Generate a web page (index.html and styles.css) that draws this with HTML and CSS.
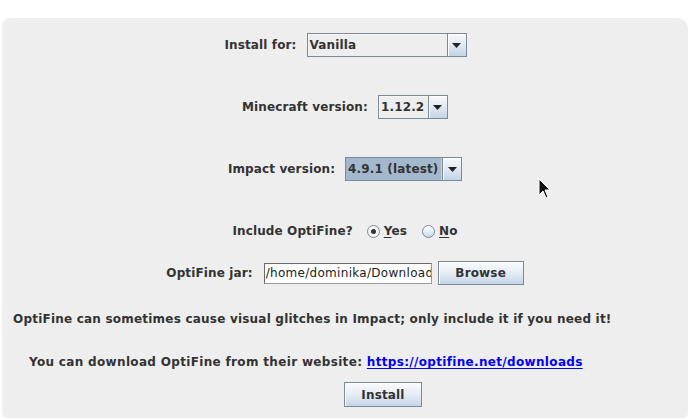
FILE: index.html
```html
<!DOCTYPE html>
<html>
<head>
<meta charset="utf-8">
<link rel="stylesheet" href="styles.css">
</head>
<body>
<div class="panel">
  <div class="row r1 centered">
    <span class="label">Install for:</span>
    <div class="combo w-install">
      <span class="combo-value">Vanilla</span>
      <span class="combo-arrow"><svg width="9" height="5" viewBox="0 0 9 5"><path d="M0 0H9L4.5 5Z" fill="#222"/></svg></span>
    </div>
  </div>
  <div class="row r2 centered">
    <span class="label">Minecraft version:</span>
    <div class="combo w-mc">
      <span class="combo-value">1.12.2</span>
      <span class="combo-arrow"><svg width="9" height="5" viewBox="0 0 9 5"><path d="M0 0H9L4.5 5Z" fill="#222"/></svg></span>
    </div>
  </div>
  <div class="row r3 centered">
    <span class="label">Impact version:</span>
    <div class="combo w-impact">
      <span class="combo-value selected">4.9.1 (latest)</span>
      <span class="combo-arrow"><svg width="9" height="5" viewBox="0 0 9 5"><path d="M0 0H9L4.5 5Z" fill="#222"/></svg></span>
    </div>
  </div>
  <div class="row r4 centered">
    <span class="label">Include OptiFine?</span>
    <span class="radio-group">
      <span class="radio checked"></span><span class="radio-text"><u>Y</u>es</span>
    </span>
    <span class="radio-group">
      <span class="radio"></span><span class="radio-text"><u>N</u>o</span>
    </span>
  </div>
  <div class="row r5 centered">
    <span class="label">OptiFine jar:</span>
    <div class="textfield"><span class="tf-text">/home/dominika/Download</span></div>
    <button class="btn btn-browse">Browse</button>
  </div>
  <div class="row r6 text-line">OptiFine can sometimes cause visual glitches in Impact; only include it if you need it!</div>
  <div class="row r7 text-line">You can download OptiFine from their website:&nbsp;<a class="link" href="#">https://optifine.net/downloads</a></div>
  <div class="row r8">
    <button class="btn btn-install">Install</button>
  </div>
</div>
<svg class="cursor" width="13" height="21" viewBox="0 0 13 21">
  <path d="M1 1V17L5 13L8 20L10 19L7 12H12Z" fill="#111" stroke="#fff" stroke-width="1" stroke-linejoin="miter"/>
</svg>
</body>
</html>
```

FILE: styles.css
```css
html, body {
  margin: 0;
  padding: 0;
  background: #ffffff;
}
body {
  width: 690px;
  height: 420px;
  overflow: hidden;
  position: relative;
  font-family: "DejaVu Sans", "Liberation Sans", sans-serif;
  font-size: 12px;
  font-weight: bold;
  color: #333333;
}
.panel {
  margin: 18px 2px 0 2px;
  width: 686px;
  height: 400px;
  background: #eeeeee;
  border-radius: 8px 11px 5px 5px;
  box-sizing: border-box;
  padding-top: 15px;
  display: flex;
  flex-direction: column;
}
.row {
  display: flex;
  align-items: center;
  flex: none;
}
.centered {
  justify-content: center;
}
.r1 { height: 24px; padding-left: 1px; }
.r2 { height: 24px; margin-top: 38px; }
.r3 { height: 24px; margin-top: 38px; }
.r4 { height: 20px; margin-top: 40px; }
.r5 { height: 24px; margin-top: 20px; }
.r6 { height: 16px; margin-top: 26px; padding-left: 11px; letter-spacing: 0.21px; }
.r7 { height: 16px; margin-top: 27px; padding-left: 27px; letter-spacing: 0.33px; }
.r8 { height: 25px; margin-top: 12px; padding-left: 342px; }

.label {
  margin-right: 10px;
  white-space: nowrap;
  line-height: 16px;
  letter-spacing: 0.12px;
}
.r5 .label { margin-right: 11px; }
.r4 .label { margin-right: 14px; }

.combo {
  display: flex;
  height: 24px;
  box-sizing: border-box;
  border: 1px solid #7a8a99;
  background: #eeeeee;
}
.w-install { width: 160px; }
.w-mc { width: 70px; }
.w-impact { width: 117px; }
.combo-value {
  flex: 1;
  line-height: 22px;
  padding-left: 2px;
  border-right: 1px solid #7a8a99;
  white-space: nowrap;
  overflow: hidden;
  background: #eeeeee;
  box-shadow: inset 1px 1px 0 #f6f6f6;
  letter-spacing: 0.15px;
}
.combo-value.selected {
  background: #a3b8cc;
  box-shadow: inset -1px 0 0 #c8d5e2;
}
.combo-arrow {
  width: 18px;
  display: flex;
  align-items: center;
  justify-content: center;
  background: linear-gradient(#f7f9fc, #e3ebf4 45%, #c2d4e6);
  box-shadow: inset 1px 1px 0 #ffffff;
}
.combo-arrow svg { display: block; margin-top: 1px; }

.radio-group {
  display: flex;
  align-items: center;
  margin-right: 15px;
}
.radio-group:last-child { margin-right: 0; }
.radio {
  width: 13px;
  height: 13px;
  box-sizing: border-box;
  border-radius: 50%;
  border: 1px solid #7a8a99;
  background: linear-gradient(#ffffff, #e6eef6 50%, #c3d5e7);
  margin-right: 4px;
  position: relative;
}
.radio.checked {
  background: #f4f6f8;
}
.radio.checked::after {
  content: "";
  position: absolute;
  left: 3px;
  top: 3px;
  width: 5px;
  height: 5px;
  border-radius: 50%;
  background: #333333;
}
.radio-text {
  line-height: 16px;
  letter-spacing: 0.12px;
}
.radio-text u {
  text-decoration-thickness: 1px;
  text-underline-offset: 2px;
}

.textfield {
  width: 168px;
  height: 21px;
  box-sizing: border-box;
  border: 1px solid #6b6b6b;
  border-right-color: #9a9a9a;
  border-bottom-color: #9a9a9a;
  background: #ffffff;
  font-weight: normal;
  color: #222222;
  line-height: 19px;
  padding-left: 1px;
  white-space: nowrap;
  overflow: hidden;
  margin-right: 6px;
}
.tf-text {
  letter-spacing: 0.3px;
}

.btn {
  font-family: "DejaVu Sans", "Liberation Sans", sans-serif;
  font-size: 12px;
  font-weight: bold;
  color: #333333;
  border: 1px solid #7a8a99;
  background: linear-gradient(#fafbfd, #e8eef6 45%, #c4d5e7);
  box-shadow: inset 1px 1px 0 #ffffff;
  padding: 0;
  margin: 0;
  box-sizing: border-box;
  border-radius: 0;
  letter-spacing: 0.15px;
}
.btn-browse {
  width: 86px;
  height: 24px;
}
.btn-install {
  width: 78px;
  height: 25px;
}

.text-line {
  white-space: nowrap;
  line-height: 16px;
}
.link {
  color: #0000ff;
  text-decoration: underline;
  text-decoration-thickness: 1px;
  text-underline-offset: 2px;
}

.cursor {
  position: absolute;
  left: 538px;
  top: 178px;
}
```
